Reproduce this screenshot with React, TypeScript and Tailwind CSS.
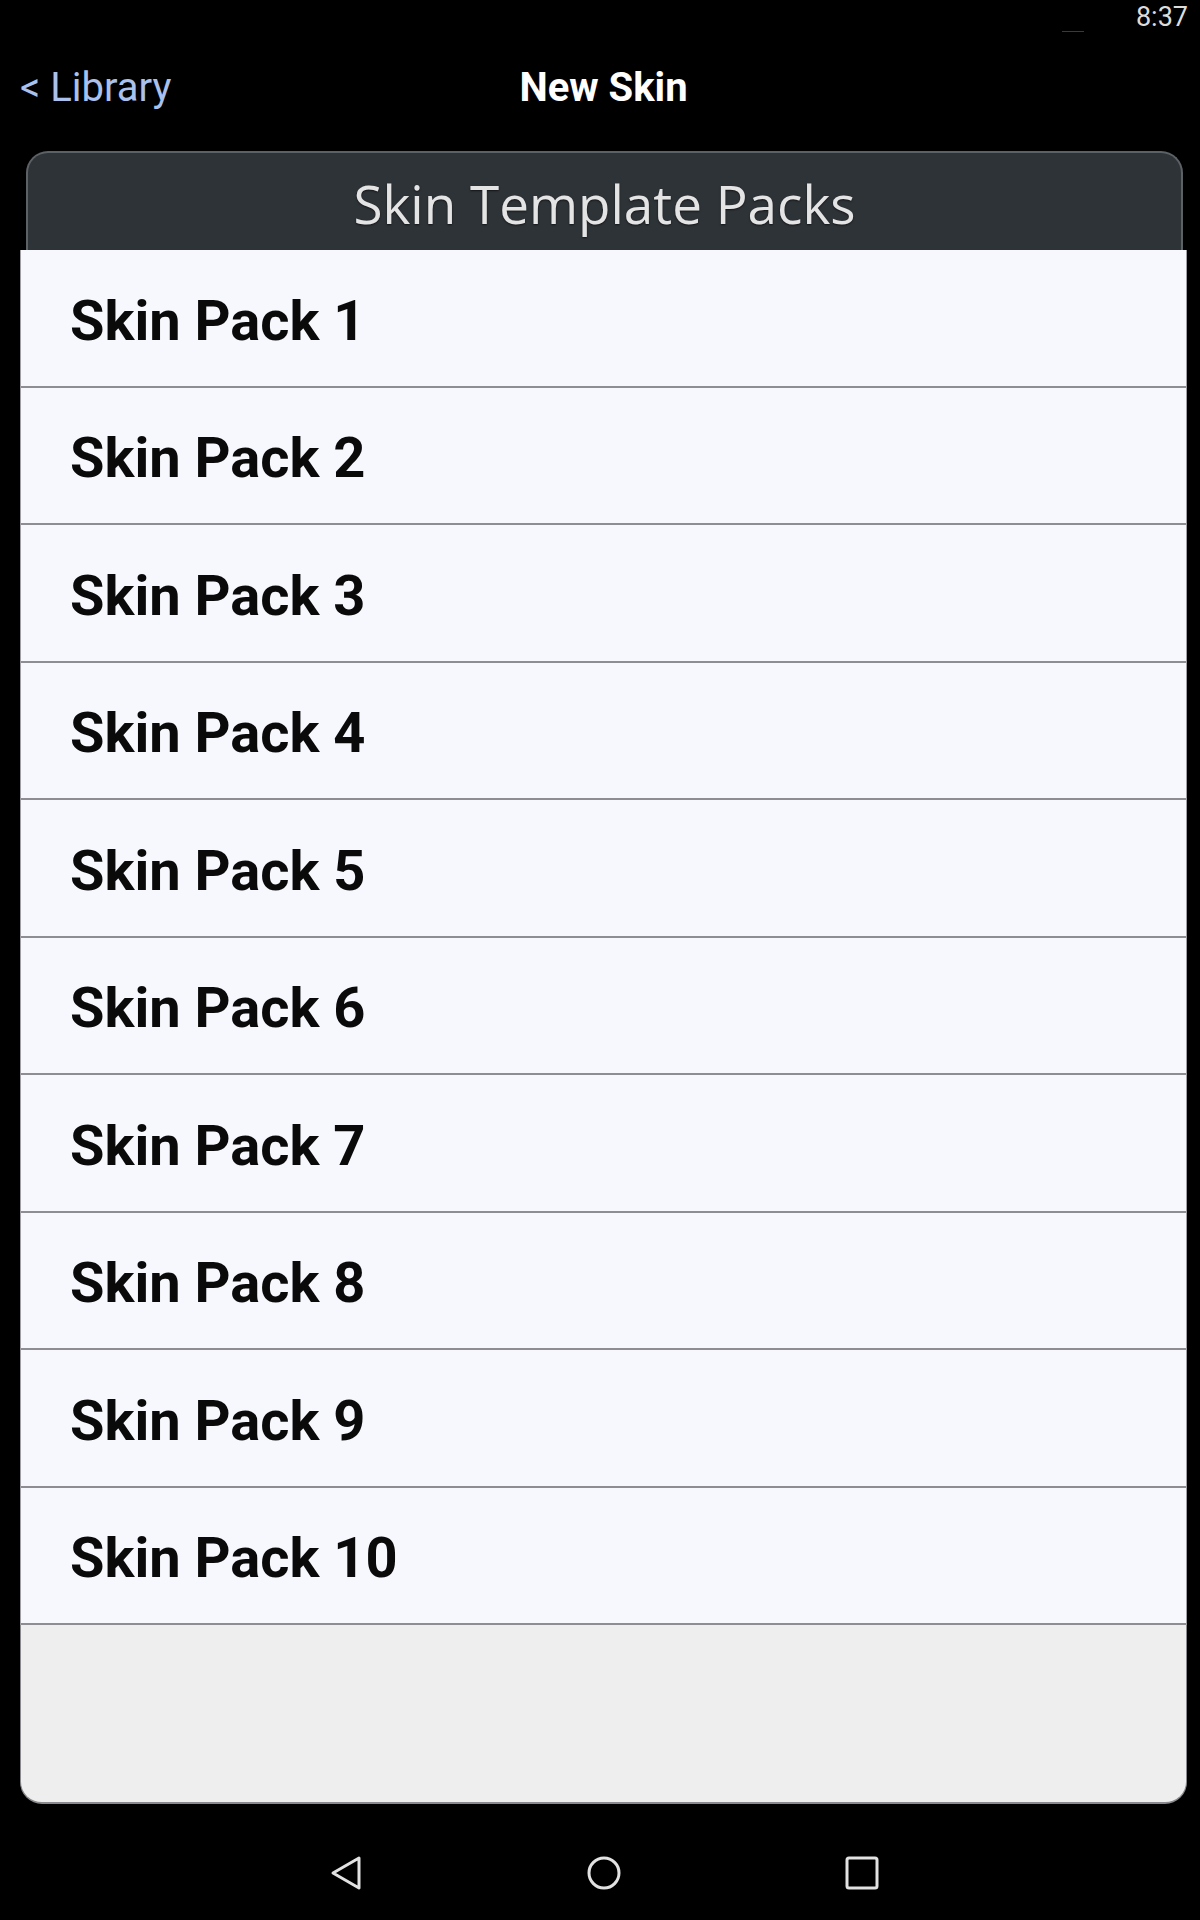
const packs = Array.from({ length: 10 }, (_, i) => `Skin Pack ${i + 1}`);

export default function App() {
  return (
    <div className="flex h-[1920px] w-[1200px] flex-col bg-black font-['Roboto',sans-serif]">
      {/* status bar */}
      <div className="flex h-[34px] items-center justify-end pr-[12px]">
        <div className="mr-[52px] mt-[28px] h-px w-[22px] bg-[#3a3a3a]" />
        <span className="text-[27px] leading-none text-[#dcdcdc]">8:37</span>
      </div>

      {/* nav bar */}
      <div className="grid h-[106px] grid-cols-[1fr_auto_1fr] items-center">
        <button className="justify-self-start pl-[20px] pt-[2px] text-[40px] leading-none text-[#a9c1ec]">
          &lt; Library
        </button>
        <h1 className="pl-[7px] pt-[2px] text-[40px] font-bold leading-none text-white">New Skin</h1>
        <div />
      </div>

      {/* panel */}
      <div className="mt-[11px] flex flex-col">
        <div className="ml-[26px] mr-[17px] flex h-[99px] items-center justify-center rounded-t-[22px] border-x-2 border-t-2 border-[#5c6166] bg-[#2e3338]">
          <h2 className="pt-[4px] font-['Open_Sans',sans-serif] text-[53px] leading-none text-[#e4e4e4] [text-shadow:0_1px_2px_rgba(0,0,0,0.6)]">
            Skin Template Packs
          </h2>
        </div>

        <div className="ml-[20px] mr-[13px] border-x border-[#a0a0a4] bg-[#f7f8fd]">
          {packs.map((name) => (
            <div
              key={name}
              className="flex h-[137.5px] items-center border-b-2 border-[#8e8e92] pl-[49px]"
            >
              <span className="pt-[6px] text-[56px] font-bold leading-none text-[#0a0a0a]">
                {name}
              </span>
            </div>
          ))}
        </div>

        <div className="ml-[20px] mr-[13px] h-[179px] rounded-b-[22px] border-x border-b-2 border-[#8a8a8e] bg-[#eeeeee]" />
      </div>

      {/* system nav */}
      <div className="flex flex-1 items-start justify-center gap-[224px] pl-[7px] pt-[51px]">
        <svg width="34" height="36" viewBox="0 0 34 36" fill="none">
          <path d="M30 3 L4 18 L30 33 Z" stroke="#e2e2e2" strokeWidth="3" strokeLinejoin="round" />
        </svg>
        <svg width="34" height="36" viewBox="0 0 34 36" fill="none">
          <circle cx="17" cy="18" r="15" stroke="#e2e2e2" strokeWidth="3" />
        </svg>
        <svg width="34" height="36" viewBox="0 0 34 36" fill="none">
          <rect x="2" y="3" width="30" height="30" rx="2" stroke="#e2e2e2" strokeWidth="3" />
        </svg>
      </div>
    </div>
  );
}
